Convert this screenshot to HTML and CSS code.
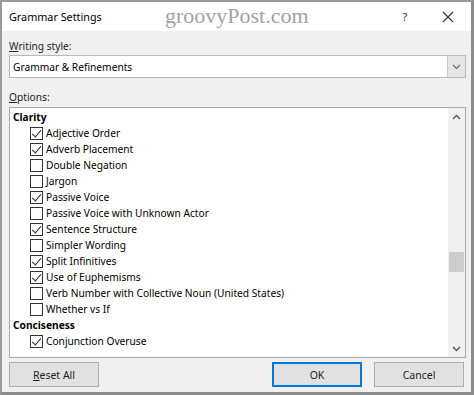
FILE: index.html
```html
<!DOCTYPE html>
<html lang="en">

<head>
    <meta charset="UTF-8">
    <title>Grammar Settings</title>
    <link rel="stylesheet" href="styles.css">
</head>

<body>
    <div class="window">
        <div class="titlebar">
            <span class="title">Grammar Settings</span>
            <span class="watermark">groovyPost.com</span>
            <span class="tb-btn help">?</span>
            <span class="tb-btn close">
                <svg width="12" height="12" viewBox="0 0 12 12"><path d="M1 1L11 11M11 1L1 11" stroke="#333" stroke-width="1.1" fill="none"/></svg>
            </span>
        </div>

        <div class="content">
            <div class="label"><u>W</u>riting style:</div>
            <div class="combo">
                <span class="combo-text">Grammar &amp; Refinements</span>
                <span class="combo-btn">
                    <svg width="9" height="6" viewBox="0 0 9 6"><path d="M1 1L4.5 4.5L8 1" stroke="#666" stroke-width="1.1" fill="none"/></svg>
                </span>
            </div>

            <div class="label options-label"><u>O</u>ptions:</div>
            <div class="listbox">
                <div class="list">
                    <div class="group">Clarity</div>
                    <div class="item checked"><span class="box"></span>Adjective Order</div>
                    <div class="item checked"><span class="box"></span>Adverb Placement</div>
                    <div class="item"><span class="box"></span>Double Negation</div>
                    <div class="item"><span class="box"></span>Jargon</div>
                    <div class="item checked"><span class="box"></span>Passive Voice</div>
                    <div class="item"><span class="box"></span>Passive Voice with Unknown Actor</div>
                    <div class="item checked"><span class="box"></span>Sentence Structure</div>
                    <div class="item"><span class="box"></span>Simpler Wording</div>
                    <div class="item checked"><span class="box"></span>Split Infinitives</div>
                    <div class="item checked"><span class="box"></span>Use of Euphemisms</div>
                    <div class="item"><span class="box"></span>Verb Number with Collective Noun (United States)</div>
                    <div class="item"><span class="box"></span>Whether vs If</div>
                    <div class="group">Conciseness</div>
                    <div class="item checked"><span class="box"></span>Conjunction Overuse</div>
                </div>
                <div class="scrollbar">
                    <span class="arrow">
                        <svg width="9" height="6" viewBox="0 0 9 6"><path d="M1 5L4.5 1.5L8 5" stroke="#555" stroke-width="1.4" fill="none"/></svg>
                    </span>
                    <div class="track">
                        <div class="thumb"></div>
                    </div>
                    <span class="arrow">
                        <svg width="9" height="6" viewBox="0 0 9 6"><path d="M1 1L4.5 4.5L8 1" stroke="#555" stroke-width="1.4" fill="none"/></svg>
                    </span>
                </div>
            </div>

            <div class="buttons">
                <button class="btn"><u>R</u>eset All</button>
                <div class="spacer"></div>
                <button class="btn default">OK</button>
                <button class="btn">Cancel</button>
            </div>
        </div>
    </div>
</body>

</html>
```

FILE: styles.css
```css
* {
    box-sizing: border-box;
}

body {
    margin: 0;
    background: #8c8c8c;
    font-family: "Noto Sans", "Open Sans", sans-serif;
    font-size: 10.2px;
    color: #000;
}

.window {
    width: 474px;
    height: 395px;
    border-left: 2px solid #9a9a9a;
    border-top: 2px solid #9a9a9a;
    border-right: 3px solid #8c8c8c;
    border-bottom: 3px solid #8c8c8c;
    background: #f0f0f0;
    display: flex;
    flex-direction: column;
}

/* 标题栏 */

.titlebar {
    height: 29px;
    background: #fff;
    display: flex;
    align-items: center;
    padding-left: 7px;
}

.title {
    font-size: 10.8px;
    width: 156px;
}

.watermark {
    font-family: "Liberation Serif", "DejaVu Serif", serif;
    font-size: 22px;
    color: #a2a2a2;
    margin-top: -2px;
    flex: 1;
}

.tb-btn {
    display: flex;
    align-items: center;
    justify-content: center;
    height: 29px;
}

.help {
    width: 46px;
    font-size: 11px;
    color: #333;
}

.close {
    width: 40px;
    margin-right: 3px;
}

/* 内容区 */

.content {
    flex: 1;
    display: flex;
    flex-direction: column;
    padding: 0 5px 0 7px;
}

.label {
    margin-top: 7px;
    height: 17px;
    line-height: 17px;
    color: #222;
}

.options-label {
    margin-top: 11px;
}

.combo {
    height: 23px;
    border: 1px solid #b8b8b8;
    background: #fff;
    display: flex;
    align-items: center;
    padding-left: 3px;
}

.combo-text {
    flex: 1;
}

.combo-btn {
    width: 18px;
    height: 21px;
    background: #e5e5e5;
    border-left: 1px solid #c8c8c8;
    display: flex;
    align-items: center;
    justify-content: center;
}

/* 列表框 */

.listbox {
    margin-top: 1px;
    height: 251px;
    border: 1px solid #a9a9a9;
    background: #fff;
    display: flex;
    overflow: hidden;
}

.list {
    flex: 1;
    padding-top: 1px;
    overflow: hidden;
}

.group {
    height: 16px;
    line-height: 16px;
    font-weight: 700;
    padding-left: 3px;
}

.item {
    height: 16px;
    line-height: 16px;
    display: flex;
    align-items: center;
    padding-left: 20px;
}

.box {
    width: 13px;
    height: 13px;
    border: 1px solid #333;
    background: #fff;
    margin-right: 3px;
    position: relative;
}

.item.checked .box::after {
    content: "";
    position: absolute;
    left: 3px;
    top: 0;
    width: 4px;
    height: 8px;
    border-right: 1.2px solid #222;
    border-bottom: 1.2px solid #222;
    transform: rotate(40deg);
}

.scrollbar {
    width: 17px;
    background: #f0f0f0;
    display: flex;
    flex-direction: column;
}

.arrow {
    height: 17px;
    display: flex;
    align-items: center;
    justify-content: center;
}

.track {
    flex: 1;
    position: relative;
}

.thumb {
    position: absolute;
    left: 1px;
    right: 1px;
    top: 127px;
    height: 20px;
    background: #cdcdcd;
}

/* 按钮 */

.buttons {
    display: flex;
    margin-top: 4px;
    margin-right: 2px;
    gap: 12px;
}

.spacer {
    flex: 1;
}

.btn {
    width: 90px;
    height: 25px;
    font-family: inherit;
    font-size: 10.5px;
    background: #e1e1e1;
    border: 1px solid #adadad;
    color: #222;
    padding: 0;
}

.btn.default {
    border: 2px solid #0078d7;
}
```
